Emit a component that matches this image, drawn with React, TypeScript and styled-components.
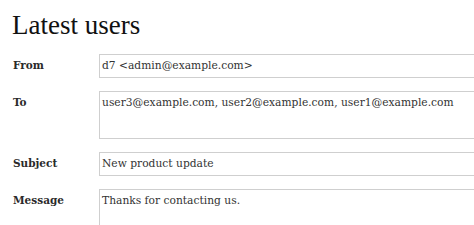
import React from 'react';
import styled, {createGlobalStyle} from 'styled-components';

const GlobalStyle = createGlobalStyle`
    html, body {
        margin: 0;
        padding: 0;
        overflow: hidden;
        background: #fff;
    }
    body {
        font-family: "DejaVu Serif", Georgia, serif;
        color: #222;
    }
`;

const Page = styled.div`
    padding: 10px 0 0 12px;
    height: 225px;
    box-sizing: border-box;
    overflow: hidden;
`;

const Title = styled.h1`
    margin: 0 0 14px 0;
    font-family: "Liberation Serif", Georgia, serif;
    font-size: 27px;
    font-weight: normal;
    line-height: 30px;
    color: #111;
`;

const Form = styled.form`
    display: grid;
    grid-template-columns: 87px 380px;
    row-gap: 13px;
`;

const Label = styled.label`
    padding: 5px 0 0 1px;
    font-size: 10.5px;
    font-weight: bold;
    color: #2a2a2a;
`;

const Field = styled.div<{$tall?:boolean}>`
    box-sizing: border-box;
    height: ${(p) => p.$tall ? 48 : 24}px;
    padding: 3px 2px;
    border: 1px solid #cfcfcf;
    font-size: 10.7px;
    line-height: 16px;
    color: #333;
    white-space: nowrap;
    overflow: hidden;
`;

const rows = [
    {name: 'From', value: 'd7 <admin@example.com>'},
    {name: 'To', value: 'user3@example.com, user2@example.com, user1@example.com', tall: true},
    {name: 'Subject', value: 'New product update'},
    {name: 'Message', value: 'Thanks for contacting us.', tall: true},
];

export default function App() {
    return (
        <>
            <GlobalStyle/>
            <Page>
                <Title>Latest users</Title>
                <Form>
                    {rows.map((row) => (
                        <React.Fragment key={row.name}>
                            <Label>{row.name}</Label>
                            <Field $tall={row.tall}>{row.value}</Field>
                        </React.Fragment>
                    ))}
                </Form>
            </Page>
        </>
    );
}
